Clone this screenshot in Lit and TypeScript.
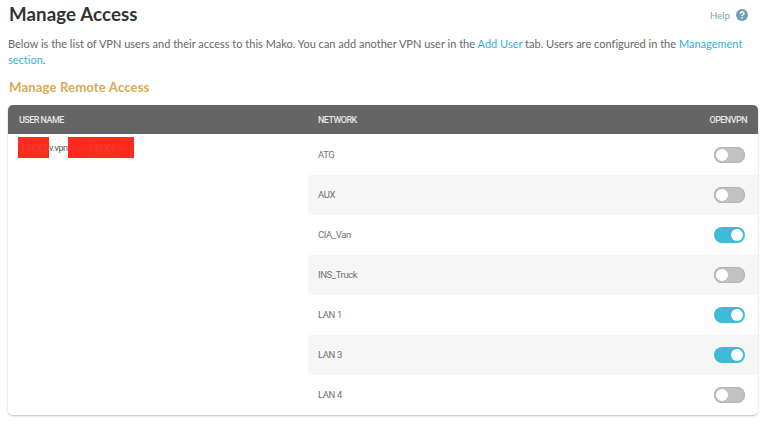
import { LitElement, html, css } from "lit";
import { customElement } from "lit/decorators.js";

const ROWS: [string, boolean][] = [
  ["ATG", false],
  ["AUX", false],
  ["CIA_Van", true],
  ["INS_Truck", false],
  ["LAN 1", true],
  ["LAN 3", true],
  ["LAN 4", false],
];

@customElement("app-root")
export class AppRoot extends LitElement {
  static styles = css`
    :host {
      display: block;
      width: 768px;
      height: 424px;
      overflow: hidden;
      background: #fff;
      font-family: Lato, "Liberation Sans", sans-serif;
      box-sizing: border-box;
      padding: 0 10px 0 8px;
      color: #555;
    }
    .top {
      display: flex;
      justify-content: space-between;
      align-items: center;
      height: 28px;
    }
    h1 {
      margin: 0;
      padding-left: 1px;
      font-size: 18.7px;
      line-height: 28px;
      font-weight: 700;
      color: #333;
      letter-spacing: 0.1px;
    }
    .help {
      display: flex;
      align-items: center;
      gap: 6px;
      padding-right: 10px;
      padding-top: 2px;
      font-size: 9.6px;
      color: #7fa3b5;
    }
    .help svg {
      width: 12px;
      height: 12px;
      display: block;
    }
    p {
      margin: 8px 0 0;
      font-size: 11px;
      line-height: 15.5px;
      color: #666;
      letter-spacing: 0.01px;
    }
    a {
      color: #2fb4d4;
      text-decoration: none;
    }
    h2 {
      margin: 10px 0 0;
      padding-left: 1px;
      font-size: 13.2px;
      line-height: 20px;
      font-weight: 700;
      color: #d9aa55;
      letter-spacing: 0.1px;
    }
    .card {
      margin-top: 8px;
      width: 750px;
      border-radius: 5px;
      box-shadow: 0 1px 2px rgba(0, 0, 0, 0.25);
      overflow: hidden;
      font-family: Roboto, "Liberation Sans", sans-serif;
    }
    .head {
      display: grid;
      grid-template-columns: 300px 1fr auto;
      align-items: center;
      height: 29px;
      padding: 0 11px 0 0;
      margin-bottom: 1px;
      background: #656565;
      color: #e6e6e6;
      font-size: 9px;
      font-weight: 500;
      letter-spacing: -0.55px;
    }
    .head span {
      padding-left: 10px;
    }
    .head span:first-child {
      padding-left: 11px;
    }
    .body {
      display: grid;
      grid-template-columns: 300px 1fr;
      background: #fff;
    }
    .user {
      position: relative;
      padding: 7px 0 0 41px;
      font-size: 9px;
      line-height: 12px;
      letter-spacing: -0.4px;
      color: #555;
    }
    .mask {
      position: absolute;
      top: 2px;
      height: 21px;
      background: #ff2a1e;
      color: #ee3a2e;
      font-size: 16px;
      line-height: 21px;
      letter-spacing: 0;
      text-align: center;
    }
    .m1 {
      left: 10px;
      width: 31px;
    }
    .m2 {
      left: 60px;
      width: 66px;
    }
    .row {
      display: flex;
      align-items: center;
      justify-content: space-between;
      height: 40px;
      padding: 0 13px 0 10px;
      font-size: 9.5px;
      letter-spacing: -0.4px;
      color: #707070;
    }
    .row span:first-child {
      margin-bottom: 1px;
    }
    .row:nth-child(even) {
      background: #f6f6f6;
    }
    .sw {
      width: 31px;
      height: 16px;
      border-radius: 8px;
      background: #c2c2c2;
      box-sizing: border-box;
      padding: 2px;
      display: flex;
      box-shadow: inset 0 0 0 1px #b3b3b3;
    }
    .sw::after {
      content: "";
      width: 12px;
      height: 12px;
      border-radius: 50%;
      background: #fff;
    }
    .sw.on {
      background: #3cbcd6;
      justify-content: flex-end;
      box-shadow: none;
    }
  `;

  render() {
    return html`
      <div class="top">
        <h1>Manage Access</h1>
        <div class="help">
          Help
          <svg viewBox="0 0 14 14">
            <circle cx="7" cy="7" r="7" fill="#6f9fb8"></circle>
            <path d="M4.900 5.400c.1-1.300 1-2 2.200-2 1.200 0 2.100.8 2.100 1.800 0 1.700-2.100 1.500-2.100 3.100" fill="none" stroke="#fff" stroke-width="1.700"></path>
            <rect x="6.200" y="9.400" width="1.800" height="1.800" fill="#fff"></rect>
          </svg>
        </div>
      </div>
      <p>
        Below is the list of VPN users and their access to this Mako. You can add another VPN user in the
        <a>Add User</a> tab. Users are configured in the <a>Management section</a>.
      </p>
      <h2>Manage Remote Access</h2>
      <div class="card">
        <div class="head">
          <span>USER NAME</span><span>NETWORK</span><span>OPENVPN</span>
        </div>
        <div class="body">
          <div class="user">
            v.vpn
            <div class="mask m1">Text</div>
            <div class="mask m2">Text</div>
          </div>
          <div>
            ${ROWS.map(
              ([n, on]) => html`<div class="row">
                <span>${n}</span><span class="sw ${on ? "on" : ""}"></span>
              </div>`
            )}
          </div>
        </div>
      </div>
    `;
  }
}
